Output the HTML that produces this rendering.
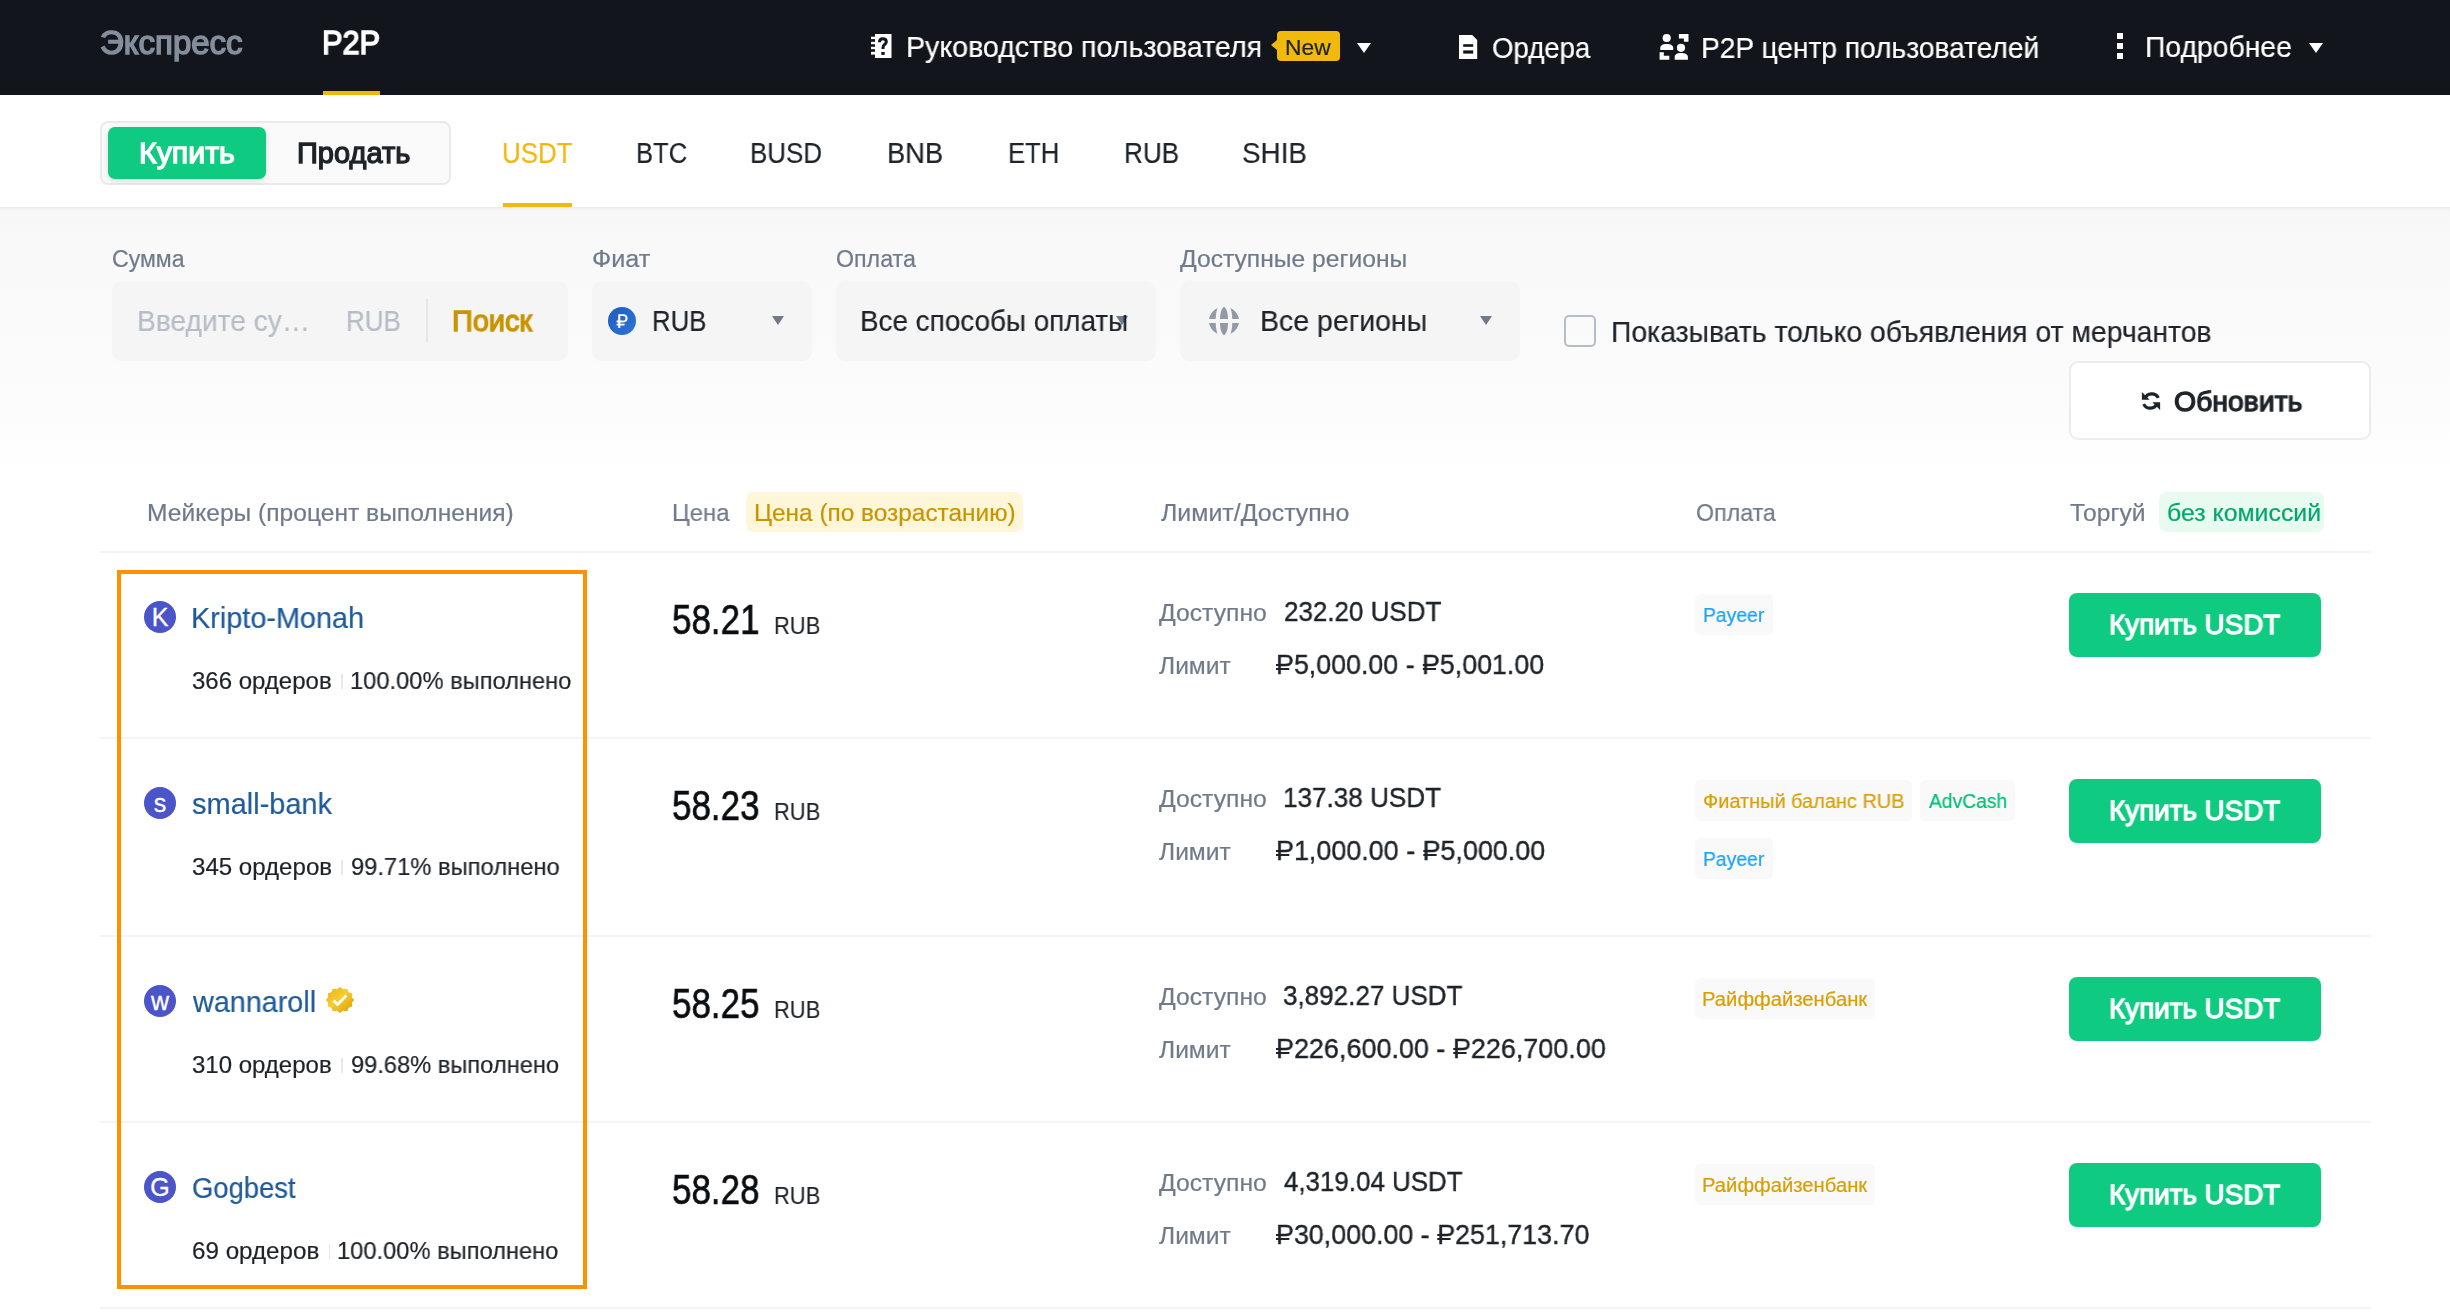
<!DOCTYPE html><html><head><meta charset="utf-8"><style>
html,body{margin:0;padding:0;width:2450px;height:1314px;overflow:hidden;background:#fff}
body{position:relative;font-family:"Liberation Sans",sans-serif}
.t{position:absolute;white-space:nowrap;transform-origin:0 0;will-change:transform;font-family:"Liberation Sans",sans-serif}
.rb{position:relative}.rb::before{content:"";position:absolute;left:0.012em;width:0.16em;top:0.563em;height:0.074em;background:currentColor}.rb::after{content:"";position:absolute;left:0.012em;width:0.50em;top:0.706em;height:0.068em;background:currentColor}
.ms{-webkit-text-stroke:0.7px currentColor}.ms2{-webkit-text-stroke:0.4px currentColor}.mr{-webkit-text-stroke:0.2px currentColor}
</style></head><body>
<div style="position:absolute;left:0px;top:0px;width:2450px;height:95px;background:#12161C"></div>
<div style="position:absolute;left:323px;top:91px;width:57px;height:4px;background:#F0B90B"></div>
<svg style="position:absolute;left:869px;top:33px" width="26" height="27" viewBox="0 0 26 27">
<rect x="6" y="1" width="16.5" height="24" fill="#fff"/>
<rect x="2" y="3.7" width="4.5" height="2.4" fill="#fff"/><rect x="2" y="8.8" width="4.5" height="2.4" fill="#fff"/>
<rect x="2" y="13.8" width="4.5" height="2.4" fill="#fff"/><rect x="2" y="18.8" width="4.5" height="2.8" fill="#fff"/>
<path d="M10.5 9.3 C10.5 6.6 12.1 5.7 13.9 5.7 C15.9 5.7 17.3 6.9 17.3 8.7 C17.3 11.3 14 11.6 14 14.4 V15.9" stroke="#12161C" stroke-width="3" fill="none"/>
<rect x="12.3" y="19" width="3.4" height="2.9" fill="#12161C"/>
</svg>
<div style="position:absolute;left:1277px;top:31px;width:63px;height:30px;background:#F0B90B;border-radius:4px"></div>
<div style="position:absolute;left:1271px;top:40px;width:0;height:0;border-top:5.5px solid transparent;border-bottom:5.5px solid transparent;border-right:6.5px solid #F0B90B"></div>
<div style="position:absolute;left:1357px;top:43px;width:0;height:0;border-left:7.0px solid transparent;border-right:7.0px solid transparent;border-top:10px solid #fff"></div>
<svg style="position:absolute;left:1458px;top:34px" width="21" height="26" viewBox="0 0 21 26">
<path d="M1 1 H14.2 L19.2 6 V25 H1 Z" fill="#fff"/>
<rect x="5.2" y="10.2" width="10" height="2.6" fill="#12161C"/><rect x="5.2" y="16.4" width="10" height="3.2" fill="#12161C"/>
</svg>
<svg style="position:absolute;left:1659px;top:33px" width="31" height="28" viewBox="0 0 31 28">
<circle cx="7.7" cy="5" r="4.1" fill="#fff"/>
<path d="M1.3 17.1 V15 C1.3 12.5 3.5 11 7.7 11 C11.9 11 14.2 12.5 14.2 15 V17.1 Z" fill="#fff"/>
<path d="M0.6 19.2 H4.8 V22.8 H10.3 V26.8 H0.6 Z" fill="#fff"/>
<path d="M19.9 1 H29.5 V8.8 H24.9 V5.6 H19.9 Z" fill="#fff"/>
<circle cx="22" cy="14.8" r="4.1" fill="#fff"/>
<path d="M15.7 26.8 V24 C15.7 21.5 17.9 20 22 20 C26.1 20 28.9 21.5 28.9 24 V26.8 Z" fill="#fff"/>
</svg>
<div style="position:absolute;left:2117px;top:33.2px;width:6px;height:6.0px;background:#fff"></div>
<div style="position:absolute;left:2117px;top:43.3px;width:6px;height:6.0px;background:#fff"></div>
<div style="position:absolute;left:2117px;top:53.2px;width:6px;height:6.0px;background:#fff"></div>
<div style="position:absolute;left:2309px;top:42.5px;width:0;height:0;border-left:7.0px solid transparent;border-right:7.0px solid transparent;border-top:10px solid #fff"></div>
<div style="position:absolute;left:0px;top:95px;width:2450px;height:112px;background:#fff"></div>
<div style="position:absolute;left:100px;top:121px;width:351px;height:64px;background:#FAFAFA;border:2px solid #E9EAEC;border-radius:8px;box-sizing:border-box"></div>
<div style="position:absolute;left:108px;top:127px;width:158px;height:52px;background:#0ECB81;border-radius:7px;box-shadow:0 2px 6px rgba(0,0,0,0.12)"></div>
<div style="position:absolute;left:503px;top:203px;width:69px;height:4px;background:#F0B90B"></div>
<div style="position:absolute;left:0px;top:207px;width:2450px;height:273px;background:linear-gradient(180deg,#EAEAEB 0px,#F3F3F3 2px,#F7F7F7 5px,#F9F9F9 30px,#FAFAFA 120px,#FCFCFC 200px,#FEFEFE 250px,#FFFFFF 270px)"></div>
<div style="position:absolute;left:112px;top:281px;width:456px;height:80px;background:#F5F5F5;border-radius:9px"></div>
<div style="position:absolute;left:592px;top:281px;width:220px;height:80px;background:#F5F5F5;border-radius:9px"></div>
<div style="position:absolute;left:836px;top:281px;width:320px;height:80px;background:#F5F5F5;border-radius:9px"></div>
<div style="position:absolute;left:1180px;top:281px;width:340px;height:80px;background:#F5F5F5;border-radius:9px"></div>
<div style="position:absolute;left:426px;top:299px;width:2px;height:43px;background:#E6E8EA"></div>
<svg style="position:absolute;left:607px;top:306px" width="30" height="30" viewBox="0 0 30 30">
<defs><linearGradient id="rg" x1="0" y1="0" x2="1" y2="1"><stop offset="0" stop-color="#1F5BC2"/><stop offset="1" stop-color="#2E75D6"/></linearGradient></defs>
<circle cx="15" cy="15" r="14" fill="url(#rg)"/>
<path d="M11.2 8.2 H16.2 C19 8.2 20.6 9.8 20.6 12.3 C20.6 14.8 19 16.4 16.2 16.4 H13.3 V17.8 H17.6 V19.5 H13.3 V22 H11.2 V19.5 H9.6 V17.8 H11.2 V16.4 H9.6 V14.6 H11.2 Z M13.3 10 V14.6 H16.1 C17.7 14.6 18.5 13.7 18.5 12.3 C18.5 10.9 17.7 10 16.1 10 Z" fill="#fff"/>
</svg>
<div style="position:absolute;left:772px;top:316px;width:0;height:0;border-left:6.0px solid transparent;border-right:6.0px solid transparent;border-top:9.5px solid #707A8A"></div>
<div style="position:absolute;left:1116px;top:316px;width:0;height:0;border-left:6.0px solid transparent;border-right:6.0px solid transparent;border-top:9.5px solid #707A8A"></div>
<div style="position:absolute;left:1480px;top:316px;width:0;height:0;border-left:6.0px solid transparent;border-right:6.0px solid transparent;border-top:9.5px solid #707A8A"></div>
<svg style="position:absolute;left:1208px;top:306px" width="32" height="30" viewBox="0 0 32 30">
<defs><clipPath id="gc"><ellipse cx="16" cy="15" rx="15" ry="14.2"/></clipPath></defs>
<g clip-path="url(#gc)" fill="#929AA5">
<path d="M0 0 H10.5 C8.6 3.5 7.8 8 7.7 13 H0 Z"/>
<path d="M0 17 H7.7 C7.8 22 8.6 26.5 10.5 30 H0 Z"/>
<path d="M32 0 H21.5 C23.4 3.5 24.2 8 24.3 13 H32 Z"/>
<path d="M32 17 H24.3 C24.2 22 23.4 26.5 21.5 30 H32 Z"/>
<path d="M16 0.7 C18.8 2.5 19.9 7.5 20 13 H12 C12.1 7.5 13.2 2.5 16 0.7 Z"/>
<path d="M16 29.3 C18.8 27.5 19.9 22.5 20 17 H12 C12.1 22.5 13.2 27.5 16 29.3 Z"/>
</g></svg>
<div style="position:absolute;left:1564px;top:315px;width:32px;height:32px;border:2px solid #B7BDC6;border-radius:5px;box-sizing:border-box"></div>
<div style="position:absolute;left:2069px;top:361px;width:302px;height:79px;background:#fff;border:2px solid #EAECEF;border-radius:9px;box-sizing:border-box"></div>
<svg style="position:absolute;left:2140px;top:390px" width="22" height="22" viewBox="0 0 22 22">
<path d="M4.9 8.6 A7.3 7.3 0 0 1 18.3 7.9" stroke="#1E2329" stroke-width="3.2" fill="none"/>
<path d="M17.1 13.4 A7.3 7.3 0 0 1 3.7 14.1" stroke="#1E2329" stroke-width="3.2" fill="none"/>
<path d="M1.9 2 L1.9 9.8 L9.6 9.8 Z" fill="#1E2329"/>
<path d="M20.1 20 L20.1 12.2 L12.4 12.2 Z" fill="#1E2329"/>
</svg>
<div style="position:absolute;left:746px;top:492px;width:277px;height:40px;background:#FEF6D8;border-radius:8px"></div>
<div style="position:absolute;left:2159px;top:492px;width:165px;height:40px;background:#E7FBF0;border-radius:8px"></div>
<div style="position:absolute;left:100px;top:551px;width:2271px;height:2px;background:#F3F4F5"></div>
<div style="position:absolute;left:100px;top:737px;width:2271px;height:2px;background:#F3F4F5"></div>
<div style="position:absolute;left:100px;top:935px;width:2271px;height:2px;background:#F3F4F5"></div>
<div style="position:absolute;left:100px;top:1121px;width:2271px;height:2px;background:#F3F4F5"></div>
<div style="position:absolute;left:100px;top:1307px;width:2271px;height:2px;background:#F3F4F5"></div>
<div style="position:absolute;left:144px;top:601px;width:32px;height:32px;border-radius:50%;background:#4B54C9;color:#fff;font-size:25px;line-height:32px;text-align:center;-webkit-text-stroke:0.3px #fff;font-family:'Liberation Sans',sans-serif">K</div>
<div style="position:absolute;left:341px;top:674px;width:1.5px;height:15px;background:#E6E8EA"></div>
<div style="position:absolute;left:2069px;top:593px;width:252px;height:64px;background:#0ECB81;border-radius:8px"></div>
<div style="position:absolute;left:1695px;top:594px;width:78px;height:41px;background:#F9F9F9;border-radius:5px"></div>
<div style="position:absolute;left:144px;top:787px;width:32px;height:32px;border-radius:50%;background:#4B54C9;color:#fff;font-size:25px;line-height:32px;text-align:center;-webkit-text-stroke:0.3px #fff;font-family:'Liberation Sans',sans-serif">s</div>
<div style="position:absolute;left:341px;top:860px;width:1.5px;height:15px;background:#E6E8EA"></div>
<div style="position:absolute;left:2069px;top:779px;width:252px;height:64px;background:#0ECB81;border-radius:8px"></div>
<div style="position:absolute;left:1695px;top:780px;width:217px;height:41px;background:#F9F9F9;border-radius:5px"></div>
<div style="position:absolute;left:1920px;top:780px;width:95px;height:41px;background:#F9F9F9;border-radius:5px"></div>
<div style="position:absolute;left:1695px;top:838px;width:78px;height:41px;background:#F9F9F9;border-radius:5px"></div>
<div style="position:absolute;left:144px;top:985px;width:32px;height:32px;border-radius:50%;background:#4B54C9;color:#fff;font-size:25px;line-height:32px;text-align:center;-webkit-text-stroke:0.3px #fff;font-family:'Liberation Sans',sans-serif">w</div>
<div style="position:absolute;left:341px;top:1058px;width:1.5px;height:15px;background:#E6E8EA"></div>
<div style="position:absolute;left:2069px;top:977px;width:252px;height:64px;background:#0ECB81;border-radius:8px"></div>
<div style="position:absolute;left:1695px;top:978px;width:179.5999999999999px;height:41px;background:#F9F9F9;border-radius:5px"></div>
<svg style="position:absolute;left:325px;top:987px" width="30" height="28" viewBox="0 0 30 28">
<defs><linearGradient id="bg1" x1="0" y1="0" x2="1" y2="1"><stop offset="0" stop-color="#E8AE12"/><stop offset="0.45" stop-color="#F8CC30"/><stop offset="1" stop-color="#D99A00"/></linearGradient></defs>
<path d="M15 1 L18.2 3.4 L22.2 2.9 L23.6 6.6 L27.3 8.1 L26.8 12 L29.2 15 L26.8 18 L27.3 21.9 L23.6 23.4 L22.2 27.1 L18.2 26.6 L15 29 L11.8 26.6 L7.8 27.1 L6.4 23.4 L2.7 21.9 L3.2 18 L0.8 15 L3.2 12 L2.7 8.1 L6.4 6.6 L7.8 2.9 L11.8 3.4 Z" transform="translate(0,-1) scale(1,0.93)" fill="url(#bg1)"/>
<path d="M8.6 13.4 L12.6 17.4 L21.4 8.6" stroke="#fff" stroke-width="2.8" fill="none"/>
</svg>
<div style="position:absolute;left:144px;top:1171px;width:32px;height:32px;border-radius:50%;background:#4B54C9;color:#fff;font-size:25px;line-height:32px;text-align:center;-webkit-text-stroke:0.3px #fff;font-family:'Liberation Sans',sans-serif">G</div>
<div style="position:absolute;left:328.5px;top:1244px;width:1.5px;height:15px;background:#E6E8EA"></div>
<div style="position:absolute;left:2069px;top:1163px;width:252px;height:64px;background:#0ECB81;border-radius:8px"></div>
<div style="position:absolute;left:1695px;top:1164px;width:179.5999999999999px;height:41px;background:#F9F9F9;border-radius:5px"></div>
<div style="position:absolute;left:117px;top:570px;width:470px;height:719px;border:4px solid #FF9000;box-sizing:border-box"></div>
<div id="h_express" class="t" style="-webkit-text-stroke:1.48px currentColor;left:100.00px;top:23.07px;font-size:33px;line-height:39.6px;font-weight:400;color:#848E9C;transform:scaleX(1.0000)">Экспресс</div>
<div id="h_p2p" class="t" style="-webkit-text-stroke:1.48px currentColor;left:322.14px;top:23.07px;font-size:33px;line-height:39.6px;font-weight:400;color:#FFFFFF;transform:scaleX(0.9322)">P2P</div>
<div id="h_guide" class="t mr" style="left:906.05px;top:29.47px;font-size:29.3px;line-height:35.16px;font-weight:400;color:#FFFFFF;transform:scaleX(0.9759)">Руководство пользователя</div>
<div id="h_new" class="t mr" style="left:1284.60px;top:33.82px;font-size:22.8px;line-height:27.36px;font-weight:400;color:#1E2329;transform:scaleX(1.0000)">New</div>
<div id="h_orders" class="t mr" style="left:1492.06px;top:30.47px;font-size:29.3px;line-height:35.16px;font-weight:400;color:#FFFFFF;transform:scaleX(0.9423)">Ордера</div>
<div id="h_center" class="t mr" style="left:1701.08px;top:29.77px;font-size:29.3px;line-height:35.16px;font-weight:400;color:#FFFFFF;transform:scaleX(0.9606)">P2P центр пользователей</div>
<div id="h_more" class="t mr" style="left:2145.07px;top:29.47px;font-size:29.3px;line-height:35.16px;font-weight:400;color:#FFFFFF;transform:scaleX(0.9664)">Подробнее</div>
<div id="t_buy" class="t" style="-webkit-text-stroke:1.30px currentColor;left:138.91px;top:135.55px;font-size:29px;line-height:34.8px;font-weight:400;color:#FFFFFF;transform:scaleX(1.0449)">Купить</div>
<div id="t_sell" class="t" style="-webkit-text-stroke:1.30px currentColor;left:297.00px;top:135.55px;font-size:29px;line-height:34.8px;font-weight:400;color:#1E2329;transform:scaleX(1.0000)">Продать</div>
<div id="tab_USDT" class="t mr" style="left:502.23px;top:135.47px;font-size:29.3px;line-height:35.16px;font-weight:400;color:#F0B90B;transform:scaleX(0.8831)">USDT</div>
<div id="tab_BTC" class="t mr" style="left:636.25px;top:135.47px;font-size:29.3px;line-height:35.16px;font-weight:400;color:#1E2329;transform:scaleX(0.8727)">BTC</div>
<div id="tab_BUSD" class="t mr" style="left:750.23px;top:135.47px;font-size:29.3px;line-height:35.16px;font-weight:400;color:#1E2329;transform:scaleX(0.8846)">BUSD</div>
<div id="tab_BNB" class="t mr" style="left:886.94px;top:135.47px;font-size:29.3px;line-height:35.16px;font-weight:400;color:#1E2329;transform:scaleX(0.9316)">BNB</div>
<div id="tab_ETH" class="t mr" style="left:1007.55px;top:135.47px;font-size:29.3px;line-height:35.16px;font-weight:400;color:#1E2329;transform:scaleX(0.8745)">ETH</div>
<div id="tab_RUB" class="t mr" style="left:1123.52px;top:135.47px;font-size:29.3px;line-height:35.16px;font-weight:400;color:#1E2329;transform:scaleX(0.8914)">RUB</div>
<div id="tab_SHIB" class="t mr" style="left:1242.35px;top:135.47px;font-size:29.3px;line-height:35.16px;font-weight:400;color:#1E2329;transform:scaleX(0.9500)">SHIB</div>
<div id="f_sum" class="t mr" style="left:111.70px;top:246.03px;font-size:23px;line-height:27.6px;font-weight:400;color:#707A8A;transform:scaleX(1.0042)">Сумма</div>
<div id="f_fiat" class="t mr" style="left:591.60px;top:246.03px;font-size:23px;line-height:27.6px;font-weight:400;color:#707A8A;transform:scaleX(1.0981)">Фиат</div>
<div id="f_pay" class="t mr" style="left:835.99px;top:246.03px;font-size:23px;line-height:27.6px;font-weight:400;color:#707A8A;transform:scaleX(1.0090)">Оплата</div>
<div id="f_reg" class="t mr" style="left:1180.00px;top:246.03px;font-size:23px;line-height:27.6px;font-weight:400;color:#707A8A;transform:scaleX(1.0711)">Доступные регионы</div>
<div id="f_ph" class="t mr" style="left:137.09px;top:302.58px;font-size:29.5px;line-height:35.4px;font-weight:400;color:#B7BDC6;transform:scaleX(0.9545)">Введите су…</div>
<div id="f_phrub" class="t mr" style="left:346.24px;top:302.58px;font-size:29.5px;line-height:35.4px;font-weight:400;color:#B7BDC6;transform:scaleX(0.8814)">RUB</div>
<div id="f_search" class="t" style="-webkit-text-stroke:1.33px currentColor;left:451.64px;top:302.58px;font-size:29.5px;line-height:35.4px;font-weight:400;color:#C99400;transform:scaleX(0.9802)">Поиск</div>
<div id="f_rub" class="t mr" style="left:652.24px;top:303.27px;font-size:29.3px;line-height:35.16px;font-weight:400;color:#1E2329;transform:scaleX(0.8793)">RUB</div>
<div id="f_allpay" class="t mr" style="left:859.80px;top:302.97px;font-size:29.3px;line-height:35.16px;font-weight:400;color:#1E2329;transform:scaleX(0.9507)">Все способы оплаты</div>
<div id="f_allreg" class="t mr" style="left:1259.55px;top:303.27px;font-size:29.3px;line-height:35.16px;font-weight:400;color:#1E2329;transform:scaleX(0.9732)">Все регионы</div>
<div id="f_merch" class="t mr" style="left:1611.08px;top:313.58px;font-size:29.5px;line-height:35.4px;font-weight:400;color:#1E2329;transform:scaleX(0.9608)">Показывать только объявления от мерчантов</div>
<div id="f_refresh" class="t" style="-webkit-text-stroke:1.28px currentColor;left:2173.71px;top:384.02px;font-size:28.5px;line-height:34.2px;font-weight:400;color:#1E2329;transform:scaleX(0.9945)">Обновить</div>
<div id="th_makers" class="t mr" style="left:146.98px;top:497.91px;font-size:24.4px;line-height:29.28px;font-weight:400;color:#707A8A;transform:scaleX(1.0083)">Мейкеры (процент выполнения)</div>
<div id="th_price" class="t mr" style="left:672.04px;top:497.71px;font-size:24.4px;line-height:29.28px;font-weight:400;color:#707A8A;transform:scaleX(0.9825)">Цена</div>
<div id="th_sort" class="t mr" style="left:753.50px;top:497.71px;font-size:24.4px;line-height:29.28px;font-weight:400;color:#C99400;transform:scaleX(1.0000)">Цена (по возрастанию)</div>
<div id="th_limit" class="t mr" style="left:1161.00px;top:498.21px;font-size:24.4px;line-height:29.28px;font-weight:400;color:#707A8A;transform:scaleX(1.0217)">Лимит/Доступно</div>
<div id="th_pay" class="t mr" style="left:1696.05px;top:498.21px;font-size:24.4px;line-height:29.28px;font-weight:400;color:#707A8A;transform:scaleX(0.9518)">Оплата</div>
<div id="th_trade" class="t mr" style="left:2070.40px;top:497.71px;font-size:24.4px;line-height:29.28px;font-weight:400;color:#707A8A;transform:scaleX(1.0082)">Торгуй</div>
<div id="th_nofee" class="t mr" style="left:2166.98px;top:497.71px;font-size:24.4px;line-height:29.28px;font-weight:400;color:#03A66D;transform:scaleX(1.0188)">без комиссий</div>
<div id="r0_name" class="t mr" style="left:191.01px;top:600.55px;font-size:29px;line-height:34.8px;font-weight:400;color:#1F5A9B;transform:scaleX(0.9942)">Kripto-Monah</div>
<div id="r0_orders" class="t mr" style="left:192.00px;top:666.88px;font-size:24px;line-height:28.8px;font-weight:400;color:#1E2329;transform:scaleX(1.0000)">366 ордеров</div>
<div id="r0_pct" class="t mr" style="left:350.03px;top:666.88px;font-size:24px;line-height:28.8px;font-weight:400;color:#1E2329;transform:scaleX(0.9865)">100.00% выполнено</div>
<div id="r0_price" class="t ms" style="left:671.66px;top:594.53px;font-size:41.7px;line-height:50.04px;font-weight:400;color:#0B0E11;transform:scaleX(0.8382)">58.21</div>
<div id="r0_cur" class="t mr" style="left:774.22px;top:610.62px;font-size:24.7px;line-height:29.64px;font-weight:400;color:#1E2329;transform:scaleX(0.8878)">RUB</div>
<div id="r0_avl" class="t mr" style="left:1159.00px;top:598.78px;font-size:24px;line-height:28.8px;font-weight:400;color:#707A8A;transform:scaleX(1.0288)">Доступно</div>
<div id="r0_av" class="t ms2" style="left:1283.78px;top:594.71px;font-size:28.3px;line-height:33.96px;font-weight:400;color:#1E2329;transform:scaleX(0.9176)">232.20 USDT</div>
<div id="r0_lml" class="t mr" style="left:1159.00px;top:651.78px;font-size:24px;line-height:28.8px;font-weight:400;color:#707A8A;transform:scaleX(1.0243)">Лимит</div>
<div id="r0_lm" class="t ms2" style="left:1276.00px;top:647.71px;font-size:28.3px;line-height:33.96px;font-weight:400;color:#1E2329;transform:scaleX(0.9468)"><span class="rb">Р</span>5,000.00 - <span class="rb">Р</span>5,001.00</div>
<div id="r0_btn" class="t" style="-webkit-text-stroke:1.27px currentColor;left:2109.03px;top:608.21px;font-size:28.3px;line-height:33.96px;font-weight:400;color:#FFFFFF;transform:scaleX(0.9826)">Купить USDT</div>
<div id="r0_tag0" class="t mr" style="left:1703.43px;top:602.87px;font-size:20px;line-height:24.0px;font-weight:400;color:#1DA2F2;transform:scaleX(0.9677)">Payeer</div>
<div id="r1_name" class="t mr" style="left:192.00px;top:786.55px;font-size:29px;line-height:34.8px;font-weight:400;color:#1F5A9B;transform:scaleX(0.9986)">small-bank</div>
<div id="r1_orders" class="t mr" style="left:192.00px;top:852.88px;font-size:24px;line-height:28.8px;font-weight:400;color:#1E2329;transform:scaleX(1.0029)">345 ордеров</div>
<div id="r1_pct" class="t mr" style="left:350.61px;top:852.88px;font-size:24px;line-height:28.8px;font-weight:400;color:#1E2329;transform:scaleX(0.9885)">99.71% выполнено</div>
<div id="r1_price" class="t ms" style="left:671.66px;top:780.53px;font-size:41.7px;line-height:50.04px;font-weight:400;color:#0B0E11;transform:scaleX(0.8382)">58.23</div>
<div id="r1_cur" class="t mr" style="left:774.22px;top:796.62px;font-size:24.7px;line-height:29.64px;font-weight:400;color:#1E2329;transform:scaleX(0.8878)">RUB</div>
<div id="r1_avl" class="t mr" style="left:1159.00px;top:784.78px;font-size:24px;line-height:28.8px;font-weight:400;color:#707A8A;transform:scaleX(1.0288)">Доступно</div>
<div id="r1_av" class="t ms2" style="left:1282.86px;top:780.71px;font-size:28.3px;line-height:33.96px;font-weight:400;color:#1E2329;transform:scaleX(0.9219)">137.38 USDT</div>
<div id="r1_lml" class="t mr" style="left:1159.00px;top:837.78px;font-size:24px;line-height:28.8px;font-weight:400;color:#707A8A;transform:scaleX(1.0243)">Лимит</div>
<div id="r1_lm" class="t ms2" style="left:1276.00px;top:833.71px;font-size:28.3px;line-height:33.96px;font-weight:400;color:#1E2329;transform:scaleX(0.9504)"><span class="rb">Р</span>1,000.00 - <span class="rb">Р</span>5,000.00</div>
<div id="r1_btn" class="t" style="-webkit-text-stroke:1.27px currentColor;left:2109.03px;top:794.21px;font-size:28.3px;line-height:33.96px;font-weight:400;color:#FFFFFF;transform:scaleX(0.9826)">Купить USDT</div>
<div id="r1_tag0" class="t mr" style="left:1702.60px;top:788.87px;font-size:20px;line-height:24.0px;font-weight:400;color:#D89F00;transform:scaleX(0.9970)">Фиатный баланс RUB</div>
<div id="r1_tag1" class="t mr" style="left:1928.60px;top:788.87px;font-size:20px;line-height:24.0px;font-weight:400;color:#02C076;transform:scaleX(0.9638)">AdvCash</div>
<div id="r1_tag2" class="t mr" style="left:1703.43px;top:846.87px;font-size:20px;line-height:24.0px;font-weight:400;color:#1DA2F2;transform:scaleX(0.9677)">Payeer</div>
<div id="r2_name" class="t mr" style="left:193.00px;top:984.55px;font-size:29px;line-height:34.8px;font-weight:400;color:#1F5A9B;transform:scaleX(0.9919)">wannaroll</div>
<div id="r2_orders" class="t mr" style="left:192.00px;top:1050.88px;font-size:24px;line-height:28.8px;font-weight:400;color:#1E2329;transform:scaleX(1.0000)">310 ордеров</div>
<div id="r2_pct" class="t mr" style="left:351.01px;top:1050.88px;font-size:24px;line-height:28.8px;font-weight:400;color:#1E2329;transform:scaleX(0.9856)">99.68% выполнено</div>
<div id="r2_price" class="t ms" style="left:671.66px;top:978.53px;font-size:41.7px;line-height:50.04px;font-weight:400;color:#0B0E11;transform:scaleX(0.8382)">58.25</div>
<div id="r2_cur" class="t mr" style="left:774.22px;top:994.62px;font-size:24.7px;line-height:29.64px;font-weight:400;color:#1E2329;transform:scaleX(0.8878)">RUB</div>
<div id="r2_avl" class="t mr" style="left:1159.00px;top:982.78px;font-size:24px;line-height:28.8px;font-weight:400;color:#707A8A;transform:scaleX(1.0288)">Доступно</div>
<div id="r2_av" class="t ms2" style="left:1282.58px;top:978.71px;font-size:28.3px;line-height:33.96px;font-weight:400;color:#1E2329;transform:scaleX(0.9201)">3,892.27 USDT</div>
<div id="r2_lml" class="t mr" style="left:1159.00px;top:1035.78px;font-size:24px;line-height:28.8px;font-weight:400;color:#707A8A;transform:scaleX(1.0243)">Лимит</div>
<div id="r2_lm" class="t ms2" style="left:1276.00px;top:1031.71px;font-size:28.3px;line-height:33.96px;font-weight:400;color:#1E2329;transform:scaleX(0.9528)"><span class="rb">Р</span>226,600.00 - <span class="rb">Р</span>226,700.00</div>
<div id="r2_btn" class="t" style="-webkit-text-stroke:1.27px currentColor;left:2109.03px;top:992.21px;font-size:28.3px;line-height:33.96px;font-weight:400;color:#FFFFFF;transform:scaleX(0.9826)">Купить USDT</div>
<div id="r2_tag0" class="t mr" style="left:1701.99px;top:986.87px;font-size:20px;line-height:24.0px;font-weight:400;color:#D89F00;transform:scaleX(1.0123)">Райффайзенбанк</div>
<div id="r3_name" class="t mr" style="left:192.06px;top:1170.55px;font-size:29px;line-height:34.8px;font-weight:400;color:#1F5A9B;transform:scaleX(0.9450)">Gogbest</div>
<div id="r3_orders" class="t mr" style="left:191.99px;top:1236.88px;font-size:24px;line-height:28.8px;font-weight:400;color:#1E2329;transform:scaleX(1.0081)">69 ордеров</div>
<div id="r3_pct" class="t mr" style="left:337.03px;top:1236.88px;font-size:24px;line-height:28.8px;font-weight:400;color:#1E2329;transform:scaleX(0.9865)">100.00% выполнено</div>
<div id="r3_price" class="t ms" style="left:671.66px;top:1164.53px;font-size:41.7px;line-height:50.04px;font-weight:400;color:#0B0E11;transform:scaleX(0.8382)">58.28</div>
<div id="r3_cur" class="t mr" style="left:774.22px;top:1180.62px;font-size:24.7px;line-height:29.64px;font-weight:400;color:#1E2329;transform:scaleX(0.8878)">RUB</div>
<div id="r3_avl" class="t mr" style="left:1159.00px;top:1168.78px;font-size:24px;line-height:28.8px;font-weight:400;color:#707A8A;transform:scaleX(1.0288)">Доступно</div>
<div id="r3_av" class="t ms2" style="left:1283.50px;top:1164.71px;font-size:28.3px;line-height:33.96px;font-weight:400;color:#1E2329;transform:scaleX(0.9154)">4,319.04 USDT</div>
<div id="r3_lml" class="t mr" style="left:1159.00px;top:1221.78px;font-size:24px;line-height:28.8px;font-weight:400;color:#707A8A;transform:scaleX(1.0243)">Лимит</div>
<div id="r3_lm" class="t ms2" style="left:1276.00px;top:1217.71px;font-size:28.3px;line-height:33.96px;font-weight:400;color:#1E2329;transform:scaleX(0.9485)"><span class="rb">Р</span>30,000.00 - <span class="rb">Р</span>251,713.70</div>
<div id="r3_btn" class="t" style="-webkit-text-stroke:1.27px currentColor;left:2109.03px;top:1178.21px;font-size:28.3px;line-height:33.96px;font-weight:400;color:#FFFFFF;transform:scaleX(0.9826)">Купить USDT</div>
<div id="r3_tag0" class="t mr" style="left:1701.99px;top:1172.87px;font-size:20px;line-height:24.0px;font-weight:400;color:#D89F00;transform:scaleX(1.0123)">Райффайзенбанк</div>
</body></html>
